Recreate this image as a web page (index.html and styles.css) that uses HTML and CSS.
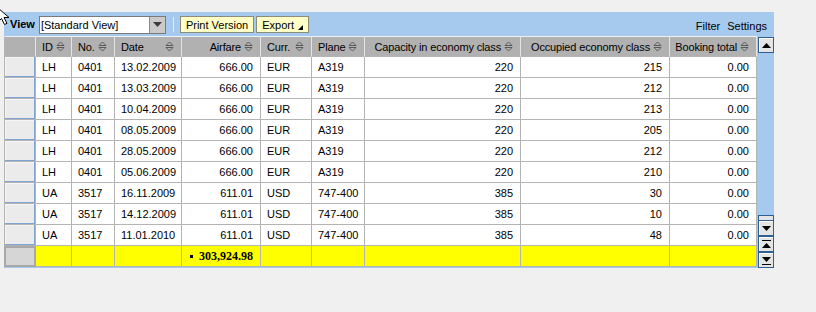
FILE: index.html
```html
<!DOCTYPE html>
<html lang="en">
<head>
    <meta charset="UTF-8">
    <meta name="viewport" content="width=device-width, initial-scale=1.0">
    <title>Flight Connections</title>
    <link rel="stylesheet" href="styles.css">
</head>
<body>
    <!-- mouse pointer left in the shot -->
    <svg class="mouse-cursor" width="12" height="20" viewBox="0 0 12 20">
        <path d="M-2 1 L-2 15 L1.5 11.5 L4.5 17.5 L7 16.3 L4 10.5 L9 10.5 Z" fill="#fff" stroke="#000" stroke-width="1"/>
    </svg>

    <div class="grid-panel">
        <div class="toolbar">
            <span class="view-label">View</span>
            <div class="view-select">
                <span class="view-select-text">[Standard View]</span>
                <span class="view-select-btn">
                    <svg width="9" height="5" viewBox="0 0 9 5"><path d="M0 0 H9 L4.5 5 Z" fill="#3c3c3c"/></svg>
                </span>
            </div>
            <span class="toolbar-sep"></span>
            <button class="toolbar-btn">Print Version</button>
            <button class="toolbar-btn">Export<svg class="menu-mark" width="5" height="5" viewBox="0 0 5 5"><path d="M5 0 V5 H0 Z" fill="#000"/></svg></button>
            <div class="toolbar-links">
                <span>Filter</span>
                <span>Settings</span>
            </div>
        </div>

        <div class="grid-body">
            <table class="grid">
                <colgroup>
                    <col class="col-sel">
                    <col class="col-id">
                    <col class="col-no">
                    <col class="col-date">
                    <col class="col-fare">
                    <col class="col-curr">
                    <col class="col-plane">
                    <col class="col-cap">
                    <col class="col-occ">
                    <col class="col-total">
                </colgroup>
                <thead>
                    <tr id="grid-head"></tr>
                </thead>
                <tbody id="grid-rows"></tbody>
                <tfoot>
                    <tr class="total-row">
                        <td class="sel-cell sel-total"></td>
                        <td></td>
                        <td></td>
                        <td></td>
                        <td class="num"><span class="total-mark"></span><span class="total-sum">303,924.98</span></td>
                        <td></td>
                        <td></td>
                        <td></td>
                        <td></td>
                        <td></td>
                    </tr>
                </tfoot>
            </table>

            <div class="vscroll">
                <button class="scroll-btn">
                    <svg width="9" height="5" viewBox="0 0 9 5"><path d="M0 5 H9 L4.5 0 Z" fill="#000"/></svg>
                </button>
                <div class="scroll-bottom">
                    <div class="scroll-thumb"></div>
                    <button class="scroll-btn">
                        <svg width="9" height="5" viewBox="0 0 9 5"><path d="M0 0 H9 L4.5 5 Z" fill="#000"/></svg>
                    </button>
                    <button class="scroll-btn">
                        <svg width="9" height="9" viewBox="0 0 9 9"><path d="M0 0 H9 V1 H0 Z M0 8 H9 L4.5 3 Z" fill="#000"/></svg>
                    </button>
                    <button class="scroll-btn">
                        <svg width="9" height="9" viewBox="0 0 9 9"><path d="M0 1 H9 L4.5 6 Z M0 8 H9 V9 H0 Z" fill="#000"/></svg>
                    </button>
                </div>
            </div>
        </div>
    </div>

    <script>
        const headRow = document.getElementById('grid-head');
        const body = document.getElementById('grid-rows');

        // Columns: label + alignment
        const columns = [
            { label: 'ID', align: 'left' },
            { label: 'No.', align: 'left' },
            { label: 'Date', align: 'left' },
            { label: 'Airfare', align: 'right' },
            { label: 'Curr.', align: 'left' },
            { label: 'Plane', align: 'left' },
            { label: 'Capacity in economy class', align: 'right' },
            { label: 'Occupied economy class', align: 'right' },
            { label: 'Booking total', align: 'right' }
        ];

        const flights = [
            ['LH', '0401', '13.02.2009', '666.00', 'EUR', 'A319', '220', '215', '0.00'],
            ['LH', '0401', '13.03.2009', '666.00', 'EUR', 'A319', '220', '212', '0.00'],
            ['LH', '0401', '10.04.2009', '666.00', 'EUR', 'A319', '220', '213', '0.00'],
            ['LH', '0401', '08.05.2009', '666.00', 'EUR', 'A319', '220', '205', '0.00'],
            ['LH', '0401', '28.05.2009', '666.00', 'EUR', 'A319', '220', '212', '0.00'],
            ['LH', '0401', '05.06.2009', '666.00', 'EUR', 'A319', '220', '210', '0.00'],
            ['UA', '3517', '16.11.2009', '611.01', 'USD', '747-400', '385', '30', '0.00'],
            ['UA', '3517', '14.12.2009', '611.01', 'USD', '747-400', '385', '10', '0.00'],
            ['UA', '3517', '11.01.2010', '611.01', 'USD', '747-400', '385', '48', '0.00']
        ];

        const sortIcon = '<svg class="sort-icon" width="9" height="11" viewBox="0 0 9 11">' +
            '<path d="M1 4.5 L4.5 1 L8 4.5 Z M1 6.5 L4.5 10 L8 6.5 Z" fill="none" stroke="#5a5a5a" stroke-width="1"/></svg>';

        // Header
        const selHead = document.createElement('th');
        selHead.classList.add('sel-head');
        headRow.appendChild(selHead);

        columns.forEach(col => {
            const th = document.createElement('th');
            th.innerHTML = `<div class="th-inner th-${col.align}"><span>${col.label}</span>${sortIcon}</div>`;
            headRow.appendChild(th);
        });

        // Data rows
        flights.forEach(flight => {
            const tr = document.createElement('tr');
            const sel = document.createElement('td');
            sel.classList.add('sel-cell');
            tr.appendChild(sel);

            flight.forEach((value, i) => {
                const td = document.createElement('td');
                if (columns[i].align === 'right') td.classList.add('num');
                td.innerText = value;
                tr.appendChild(td);
            });

            body.appendChild(tr);
        });
    </script>
</body>
</html>
```

FILE: styles.css
```css
body {
    margin: 0;
    background-color: #f0f0f0;
    font-family: "Liberation Sans", Arial, sans-serif;
    font-size: 11px;
    color: #000;
}

.mouse-cursor {
    position: absolute;
    left: 0;
    top: 7px;
}

/* Panel */
.grid-panel {
    margin: 12px 0 0 4px;
    width: 770px;
    background-color: #a6c9ee;
    padding-bottom: 1px;
}

/* Toolbar */
.toolbar {
    height: 24px;
    display: flex;
    align-items: center;
}

.view-label {
    font-weight: bold;
    margin-left: 6px;
    margin-right: 4px;
}

.view-select {
    display: flex;
    width: 127px;
    height: 18px;
    margin-top: 1px;
    box-sizing: border-box;
    border: 1px solid #7a7a7a;
    background-color: #fff;
}

.view-select-text {
    flex: 1;
    padding-left: 1px;
    line-height: 16px;
}

.view-select-btn {
    width: 15px;
    display: flex;
    align-items: center;
    justify-content: center;
    background-color: #cacaca;
    border-left: 1px solid #8a8a8a;
}

.toolbar-sep {
    width: 1px;
    height: 15px;
    margin: 1px 6px 0 7px;
    background-color: #e4eef9;
}

.toolbar-btn {
    height: 17px;
    margin: 1px 2px 0 0;
    padding: 0 5px;
    border: 1px solid #8c8c7a;
    background-color: #ffffc6;
    font-family: inherit;
    font-size: 11px;
    color: #000;
    display: flex;
    align-items: center;
}

.menu-mark {
    margin: 5px 0 0 4px;
}

.toolbar-links {
    margin-left: auto;
    margin-right: 7px;
    margin-top: 4px;
    display: flex;
    gap: 7px;
}

/* Grid */
.grid-body {
    display: flex;
}

.grid {
    border-collapse: separate;
    border-spacing: 0;
    table-layout: fixed;
    width: 753px;
}

.col-sel { width: 32px; }
.col-id { width: 36px; }
.col-no { width: 43px; }
.col-date { width: 67px; }
.col-fare { width: 79px; }
.col-curr { width: 51px; }
.col-plane { width: 53px; }
.col-cap { width: 156px; }
.col-occ { width: 149px; }
.col-total { width: 87px; }

.grid thead tr {
    height: 21px;
}

.grid th {
    padding: 0 7px 0 6px;
    background-color: #b1b1b1;
    border-top: 1px solid #eef2f6;
    border-right: 1px solid #e4e4e4;
    border-bottom: 1px solid #b4b4b4;
    font-weight: normal;
    letter-spacing: -0.15px;
    white-space: nowrap;
}

.grid th.sel-head {
    border-left: 1px solid #b4b4b4;
}

.th-inner {
    display: flex;
    align-items: center;
    gap: 3px;
}

.th-left {
    justify-content: space-between;
}

.th-right {
    justify-content: flex-end;
}

.sort-icon {
    flex-shrink: 0;
}

.grid tbody tr,
.grid tfoot tr {
    height: 21px;
}

.grid td {
    padding: 0 6px;
    background-color: #fff;
    border-right: 1px solid #b4b4b4;
    border-bottom: 1px solid #b4b4b4;
    white-space: nowrap;
    overflow: hidden;
}

.grid td.num {
    text-align: right;
    padding-right: 7px;
}

/* Row selectors */
.grid td.sel-cell {
    padding: 0;
    background-color: #ebebeb;
    border-left: 1px solid #b4b4b4;
    box-shadow: inset -1px -1px 0 #7da4d2, inset 1px 1px 0 #f6f6f6;
}

.grid td.sel-total {
    background-color: #d6d6d6;
    border-left: 2px solid #a8a8a8;
    border-right: 2px solid #a8a8a8;
    border-bottom: 2px solid #a8a8a8;
    box-shadow: inset 0 2px 0 #a8a8a8;
}

.total-row td {
    background-color: #ffff00;
}

.total-mark {
    display: inline-block;
    width: 3px;
    height: 3px;
    margin-right: 6px;
    vertical-align: middle;
    background-color: #000;
}

.total-sum {
    font-family: "Liberation Serif", "Times New Roman", serif;
    font-weight: bold;
    font-size: 12px;
}

/* Vertical scroll bar */
.vscroll {
    width: 17px;
    display: flex;
    flex-direction: column;
    justify-content: space-between;
    padding: 1px 0 0 1px;
}

.scroll-bottom {
    display: flex;
    flex-direction: column;
    margin-bottom: -1px;
}

.scroll-thumb {
    width: 16px;
    height: 5px;
    box-sizing: border-box;
    border: 1px solid #2e5f92;
    border-bottom: none;
    background-color: #e4e4e4;
}

.scroll-btn {
    width: 16px;
    height: 16px;
    padding: 0;
    box-sizing: border-box;
    border: 1px solid #2e5f92;
    background-color: #e4e4e4;
    box-shadow: inset 1px 1px 0 #fff;
    display: flex;
    align-items: center;
    justify-content: center;
}
```
